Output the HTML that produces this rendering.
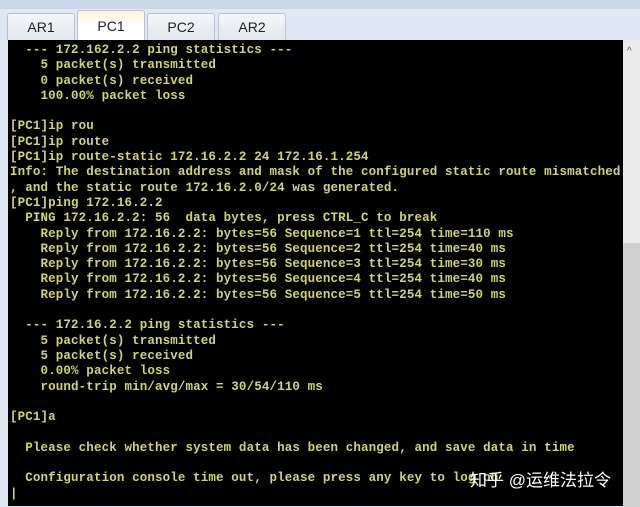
<!DOCTYPE html><html><head><style>
body{margin:0;width:640px;height:507px;overflow:hidden;background:#dfe8f3;position:relative;font-family:"Liberation Sans",sans-serif}
.top{position:absolute;left:0;top:0;width:640px;height:9px;background:#c9d7e8}
.tab{position:absolute;top:13px;height:26px;width:66px;background:linear-gradient(#f4f6f9,#e2e7ee);border:1px solid #b9c3cf;border-bottom:none;border-radius:3px 3px 0 0;font-size:14px;color:#222;text-align:center;line-height:26px}
.tab.a{top:10px;height:30px;background:linear-gradient(#fff3cf,#fdfdfd 40%);line-height:30px}
.term{position:absolute;left:8px;top:40px;width:615px;height:466px;background:#000}
pre{margin:0;position:absolute;left:2px;top:3px;font-family:"Liberation Mono",monospace;font-size:12.5px;letter-spacing:0.13px;line-height:15.3px;color:#d2d46e;font-weight:bold}
.sb{position:absolute;left:623px;top:40px;width:17px;height:467px;background:#ececec}
.th{position:absolute;left:623px;top:243px;width:17px;height:264px;background:#cfcfcf}
.wm{position:absolute;left:470px;top:466px;font-family:"Liberation Sans","Noto Sans CJK SC",sans-serif;font-size:17px;color:#fff}
</style></head><body>
<div class="top"></div>
<div class="tab" style="left:7px">AR1</div>
<div class="tab a" style="left:77px">PC1</div>
<div class="tab" style="left:147px">PC2</div>
<div class="tab" style="left:218px">AR2</div>
<div class="term"><pre>  --- 172.162.2.2 ping statistics ---
    5 packet(s) transmitted
    0 packet(s) received
    100.00% packet loss

[PC1]ip rou
[PC1]ip route
[PC1]ip route-static 172.16.2.2 24 172.16.1.254
Info: The destination address and mask of the configured static route mismatched
, and the static route 172.16.2.0/24 was generated.
[PC1]ping 172.16.2.2
  PING 172.16.2.2: 56  data bytes, press CTRL_C to break
    Reply from 172.16.2.2: bytes=56 Sequence=1 ttl=254 time=110 ms
    Reply from 172.16.2.2: bytes=56 Sequence=2 ttl=254 time=40 ms
    Reply from 172.16.2.2: bytes=56 Sequence=3 ttl=254 time=30 ms
    Reply from 172.16.2.2: bytes=56 Sequence=4 ttl=254 time=40 ms
    Reply from 172.16.2.2: bytes=56 Sequence=5 ttl=254 time=50 ms

  --- 172.16.2.2 ping statistics ---
    5 packet(s) transmitted
    5 packet(s) received
    0.00% packet loss
    round-trip min/avg/max = 30/54/110 ms

[PC1]a

  Please check whether system data has been changed, and save data in time

  Configuration console time out, please press any key to log on
|</pre></div>
<div class="sb"></div><div class="th"></div>
<div style="position:absolute;left:627px;top:46px;font-size:10px;color:#555">^</div>
<div class="wm">知乎 @运维法拉令</div>
</body></html>
